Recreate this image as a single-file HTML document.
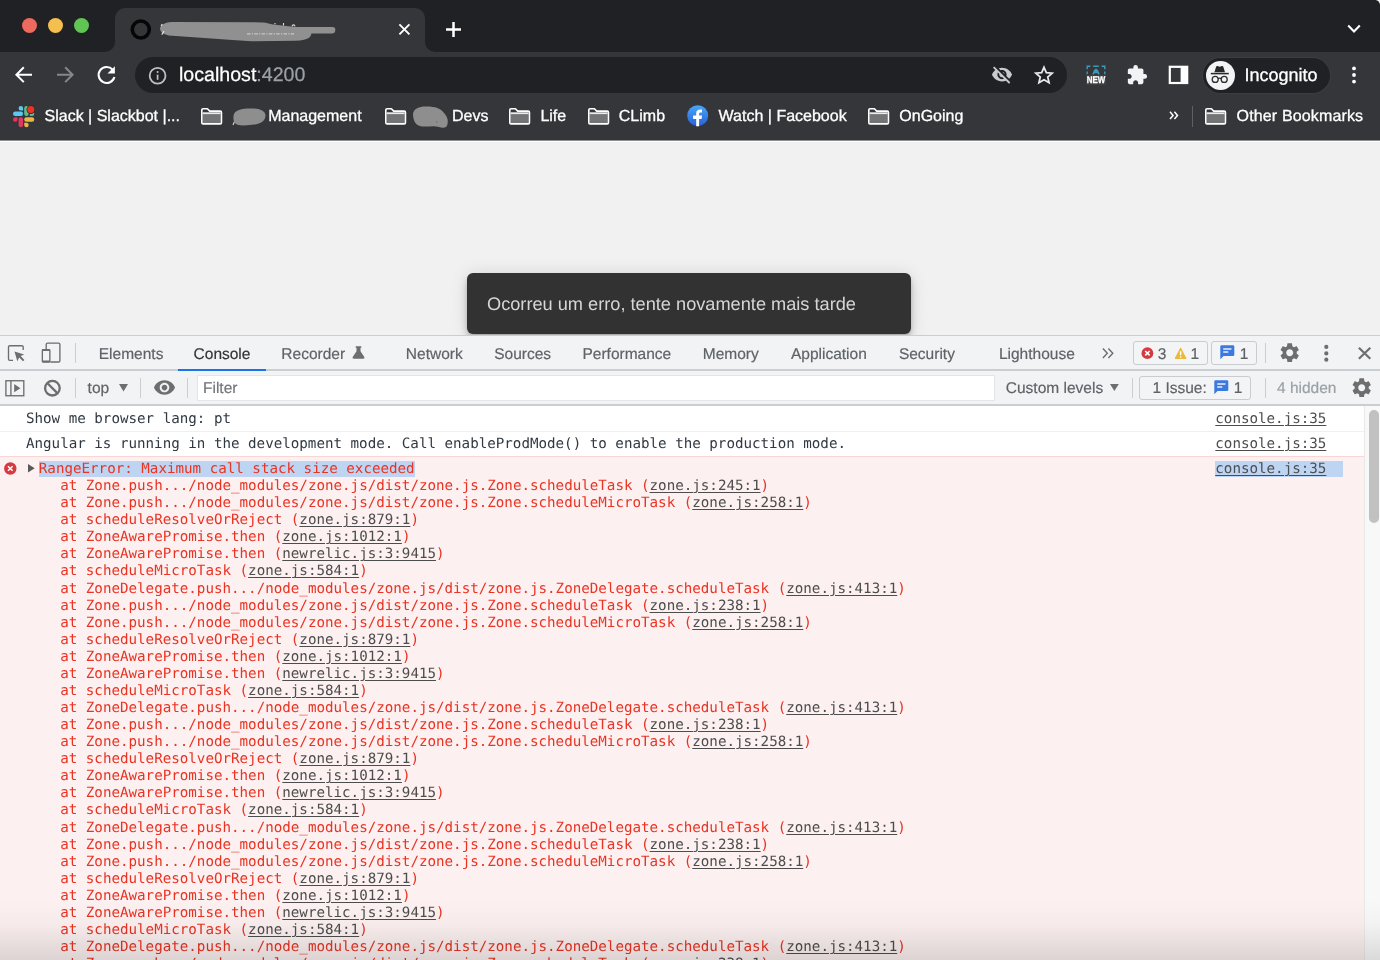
<!DOCTYPE html>
<html lang="en">
<head>
<meta charset="utf-8">
<title>localhost:4200</title>
<style>
html,body{margin:0;padding:0}
body{width:1380px;height:960px;overflow:hidden;position:relative;background:#f1f1f1;font-family:"Liberation Sans",Arial,sans-serif;-webkit-font-smoothing:antialiased;text-rendering:geometricPrecision}
#root{position:absolute;left:0;top:0;width:1380px;height:960px;overflow:hidden;will-change:transform}
.a{position:absolute}
svg{position:absolute;overflow:visible}
/* ---------- browser chrome ---------- */
#tabstrip{left:0;top:0;width:1380px;height:52px;background:#202124}
#chrome{left:0;top:51.6px;width:1380px;height:88.4px;background:#35363a}
#chromeline1{left:0;top:140px;width:1380px;height:1px;background:#8f9092}
#chromeline2{left:0;top:141px;width:1380px;height:1px;background:#fdfdfd}
.tl{width:15px;height:15px;border-radius:50%;top:17.5px}
#tab{left:115px;top:8px;width:310px;height:44px;background:#35363a;border-radius:10px 10px 0 0}
.tabfoot{top:41.6px;width:10px;height:10px;background:#35363a}
.tabfoot i{position:absolute;left:0;top:0;width:10px;height:10px;background:#202124}
#omni{left:135px;top:57px;width:932px;height:35.5px;border-radius:18px;background:#202124}
.bm{top:107px;height:20px;line-height:20px;font-size:16px;color:#fff;white-space:nowrap;-webkit-text-stroke:.3px #fff}
#url{left:179px;top:63px;height:24px;line-height:24px;font-size:19.6px;color:#fff;white-space:nowrap;-webkit-text-stroke:.25px #fff}
#url span{color:#9aa0a6;-webkit-text-stroke:.25px #9aa0a6}
#incog{left:1203px;top:57.5px;width:127px;height:35px;border-radius:18px;background:#202124;box-shadow:0 0 0 1px #3c3d41}
#incogc{left:1205.5px;top:60.5px;width:29px;height:29px;border-radius:50%;background:#f1f3f4}
#incogt{left:1244.5px;top:63px;height:24px;line-height:24px;font-size:18px;color:#fff;white-space:nowrap;-webkit-text-stroke:.3px #fff}
/* ---------- page ---------- */
#toast{left:466.5px;top:272.5px;width:444.5px;height:61.5px;border-radius:6px;background:#323232;box-shadow:0 3px 5px -1px rgba(0,0,0,.2),0 6px 10px 0 rgba(0,0,0,.14),0 1px 18px 0 rgba(0,0,0,.12)}
#toastt{left:487px;top:291px;height:26px;line-height:26px;font-size:18.2px;color:#d6d6d6;white-space:nowrap}

/* ---------- devtools ---------- */
#dt{left:0;top:335px;width:1380px;height:625px;background:#f1f3f4}
.hl{left:0;width:1380px;height:1px;background:#cacdd1}
.vsep{width:1px;background:#cbcdd1}
.tab{-webkit-text-stroke-width:.18px;top:344.8px;height:20px;line-height:20px;font-size:15.5px;width:120px;margin-left:-60px;text-align:center;color:#5f6368;white-space:nowrap}
.tb{-webkit-text-stroke-width:.18px;top:379.3px;height:20px;line-height:20px;font-size:15.5px;color:#5f6368;white-space:nowrap}
.badge{border:1px solid #c9ccd0;border-radius:3px;box-sizing:border-box;background:#f3f4f5}
#filter{left:196.5px;top:374.5px;width:798.5px;height:26.5px;background:#fff;box-sizing:border-box;border:1px solid #e3e5e8}
#cons{left:0;top:406px;width:1363.5px;height:554px;background:#fff;overflow:hidden}
#errbg{left:0;top:50px;width:1363.5px;height:504px;background:#fcf0f0;border-top:1px solid #f7d6d5;box-sizing:border-box}
.m{font-family:"DejaVu Sans Mono","Liberation Mono",monospace;font-size:14.19px;line-height:17px;height:17px;white-space:pre;color:#303942;letter-spacing:0}
.e{color:#e93323}
.m u{color:#4d4d4d;text-decoration:underline;text-decoration-thickness:1px;text-underline-offset:2px}
.src{left:1215.3px}
#sbar{left:1363.5px;top:406px;width:16.5px;height:554px;background:#f8f8f8;border-left:1px solid #e9e9e9;box-sizing:border-box}
#thumb{left:1368.5px;top:409.7px;width:10px;height:113.3px;border-radius:5px;background:#c1c1c1}
#shade{left:0;top:900px;width:1380px;height:60px;background:linear-gradient(to bottom,rgba(0,0,0,0) 0,rgba(0,0,0,.025) 40%,rgba(0,0,0,.12) 100%)}
</style>
</head>
<body>
<div id="root">

<!-- ================= TAB STRIP ================= -->
<div id="tabstrip" class="a"></div>
<div id="chrome" class="a"></div>
<div class="a tl" style="left:22px;background:#ed6a5e"></div>
<div class="a tl" style="left:48px;background:#f5bf4f"></div>
<div class="a tl" style="left:74px;background:#61c554"></div>

<div id="tab" class="a"></div>
<div class="a tabfoot" style="left:105px"><i style="border-radius:0 0 10px 0"></i></div>
<div class="a tabfoot" style="left:425px"><i style="border-radius:0 0 0 10px"></i></div>
<!-- favicon ring -->
<svg style="left:130px;top:18px" width="22" height="22" viewBox="0 0 22 22"><circle cx="10.800" cy="11.500" r="8.500" fill="none" stroke="#060606" stroke-width="3.600"/></svg>
<!-- redacted tab title scribble -->
<svg style="left:158px;top:18px" width="182" height="26" viewBox="0 0 182 26">
  <path d="M2 10.500C2 8 6 4.200 13.700 3.900L105 4.400C109 4.600 112 6 115 6.500L137 8.900L174.600 9.100Q177.600 9.400 177.300 12.300Q177 15.500 174 15.500L153.500 15.500Q153 18 151.400 19.500Q148 22.500 137 22.700L93.400 23.200Q70 22 50 20.300L10.800 17.400Q2 15.500 2 10.500Z" fill="#909090"/>
  <path d="M3 7.800l1.400-1.600M3.800 16.600l2.200-3.400" stroke="#e4e4e4" stroke-width="1.200" fill="none"/>
  <path d="M89 15.900h47" stroke="#dedede" stroke-width="0.900" stroke-dasharray="3.500 1.300 1.200 1.300" fill="none"/>
  <path d="M117 6.200v-1.200M125.500 7.600v-2.600M134 8.300c.3-1.800 2.600-2 3 0" stroke="#dcdcdc" stroke-width="1.100" fill="none"/>
</svg>
<!-- tab close -->
<svg style="left:398px;top:23px" width="13" height="13" viewBox="0 0 13 13"><path d="M1.4 1.4l10 10M11.4 1.4l-10 10" stroke="#fff" stroke-width="1.9" fill="none"/></svg>
<!-- new tab plus -->
<svg style="left:445px;top:21px" width="17" height="17" viewBox="0 0 17 17"><path d="M8.5 1v15M1 8.5h15" stroke="#fff" stroke-width="2.5" fill="none"/></svg>
<!-- tab search chevron -->
<svg style="left:1347px;top:24px" width="14" height="10" viewBox="0 0 14 10"><path d="M1.2 1.6L7 7.6l5.8-6" stroke="#fff" stroke-width="2.1" fill="none"/></svg>

<svg style="left:1375px;top:0" width="5" height="5" viewBox="0 0 5 5"><path d="M0.500 0H5V4.800Q4.500 0.800 0.500 0Z" fill="#f4f4f4"/></svg>
<!-- ================= TOOLBAR ================= -->
<!-- back -->
<svg style="left:14px;top:65px" width="20" height="20" viewBox="0 0 20 20"><path d="M18 9.7H2.6M9.8 2.3L2.4 9.7l7.4 7.4" stroke="#fff" stroke-width="2" fill="none"/></svg>
<!-- forward (disabled) -->
<svg style="left:55px;top:65px" width="20" height="20" viewBox="0 0 20 20"><path d="M2 9.7h15.4M10.2 2.3l7.4 7.4-7.4 7.4" stroke="#86878a" stroke-width="2" fill="none"/></svg>
<!-- reload -->
<svg style="left:96px;top:64px" width="21" height="22" viewBox="0 0 21 22"><path d="M16.6 5.6A8 8 0 1 0 18.4 12.9" stroke="#fff" stroke-width="2.1" fill="none"/><path d="M18.9 2.2v7.4h-7.4z" fill="#fff"/></svg>

<div id="omni" class="a"></div>
<!-- info icon -->
<svg style="left:148px;top:66px" width="20" height="20" viewBox="0 0 20 20"><circle cx="9.600" cy="9.800" r="7.900" fill="none" stroke="#bdc1c6" stroke-width="1.800"/><path d="M9.6 8.6v5.2" stroke="#bdc1c6" stroke-width="1.7"/><circle cx="9.6" cy="6" r="1.05" fill="#bdc1c6"/></svg>
<div id="url" class="a">localhost<span>:4200</span></div>
<!-- eye off -->
<svg style="left:991px;top:64px" width="22" height="22" viewBox="0 0 24 24"><path fill="#c9cacc" d="M12 6.5c2.76 0 5 2.24 5 5 0 .51-.1 1-.24 1.46l3.06 3.06c1.39-1.23 2.49-2.77 3.18-4.53C21.270 7.110 17 4 12 4c-1.27 0-2.49.2-3.64.57l2.170 2.170c.47-.14.96-.24 1.47-.24zM2.710 3.160a.996.996 0 0 0 0 1.410l1.970 1.970A11.892 11.892 0 0 0 1 11.500C2.730 15.890 7 19 12 19c1.520 0 2.970-.3 4.310-.82l2.720 2.720a.996.996 0 1 0 1.410-1.410L4.130 3.160c-.39-.39-1.030-.39-1.420 0zM12 16.500c-2.760 0-5-2.240-5-5 0-.77.180-1.500.49-2.140l1.570 1.570c-.03.180-.06.370-.06.570 0 1.660 1.340 3 3 3 .2 0 .38-.03.570-.07L14.140 16c-.65.320-1.370.5-2.140.5zm2.970-5.330a2.970 2.970 0 0 0-2.640-2.640l2.640 2.640z"/></svg>
<!-- star -->
<svg style="left:1033px;top:63.500px" width="22" height="22" viewBox="0 0 24 24"><path fill="none" stroke="#e8eaed" stroke-width="1.9" stroke-linejoin="miter" d="M12 3.600l2.550 5.900 6.350.55-4.820 4.200 1.450 6.250L12 17.180 6.470 20.500l1.450-6.250L3.100 10.050l6.350-.55z"/></svg>
<!-- NEW extension icon -->
<svg style="left:1086px;top:65px" width="20" height="20" viewBox="0 0 20 20">
  <rect x="0" y="10" width="20" height="10" fill="#403f40"/>
  <path d="M1.200 4.200V1.300H4.400M7.200 1.300H12.800M15.600 1.300H18.800V4.200M1.200 6.600V9.200M18.800 6.600V9.200" fill="none" stroke="#3a9ab8" stroke-width="1.400"/>
  <path d="M7 9.300L8.900 5.200Q10 4 11.100 5.200L13 9.300M9.400 7.400L10 6.200L10.600 7.400Z" stroke="#3a9ab8" stroke-width="1.600" fill="none"/>
  <text x="10" y="18.400" text-anchor="middle" font-family="Liberation Sans,Arial,sans-serif" font-weight="bold" font-size="10" fill="#fff" stroke="#fff" stroke-width=".35" textLength="18.500" lengthAdjust="spacingAndGlyphs">NEW</text>
</svg>
<!-- puzzle -->
<svg style="left:1126px;top:63.500px" width="22" height="22" viewBox="0 0 24 24"><path fill="#f1f3f4" d="M20.500 11H19V7c0-1.100-.9-2-2-2h-4V3.500a2.500 2.500 0 0 0-5 0V5H4c-1.100 0-1.990.9-1.990 2v3.800H3.500c1.490 0 2.700 1.210 2.700 2.700s-1.210 2.700-2.700 2.700H2V20c0 1.100.9 2 2 2h3.800v-1.500c0-1.490 1.210-2.700 2.700-2.700 1.490 0 2.700 1.210 2.700 2.700V22H17c1.100 0 2-.9 2-2v-4h1.500a2.500 2.500 0 0 0 0-5z"/></svg>
<!-- side panel -->
<svg style="left:1168px;top:65px" width="21" height="20" viewBox="0 0 21 20"><rect x="1.800" y="1.800" width="17.400" height="16.200" fill="none" stroke="#fff" stroke-width="2.200"/><rect x="12.600" y="1.800" width="6.600" height="16.200" fill="#fff"/></svg>
<!-- incognito pill -->
<div id="incog" class="a"></div>
<div id="incogc" class="a"></div>
<svg style="left:1209px;top:64px" width="22" height="22" viewBox="0 0 22 22">
  <path d="M5.400 8.200L7.100 2.700c.2-.6.800-.9 1.400-.7l2.200.8 2.200-.8c.6-.2 1.200.1 1.400.7l1.700 5.500z" fill="#26272a"/>
  <path d="M1.800 9.600h18" stroke="#26272a" stroke-width="1.500"/>
  <circle cx="6.200" cy="15.400" r="3" fill="none" stroke="#2d2e31" stroke-width="1.300"/>
  <circle cx="15.200" cy="15.400" r="3" fill="none" stroke="#2d2e31" stroke-width="1.300"/>
  <path d="M9.100 14.800c1-.8 2.200-.8 3.200 0" stroke="#2d2e31" stroke-width="1.200" fill="none"/>
</svg>
<div id="incogt" class="a">Incognito</div>
<!-- menu dots -->
<svg style="left:1350px;top:64px" width="8" height="22" viewBox="0 0 8 22"><circle cx="4" cy="4.400" r="1.900" fill="#fff"/><circle cx="4" cy="11" r="1.900" fill="#fff"/><circle cx="4" cy="17.600" r="1.900" fill="#fff"/></svg>

<!-- ================= BOOKMARKS BAR ================= -->
<svg style="left:12.7px;top:105.7px" width="21.3" height="21.3" viewBox="0 0 21.3 21.3">
  <path d="M10.070 4.500H7.820A2.250 2.250 0 1 1 10.070 2.250Z" fill="#5ec8f2"/>
  <rect x="0" y="5.570" width="10.070" height="4.500" rx="2.250" fill="#5ec8f2"/>
  <rect x="11.220" y="0" width="4.500" height="10.070" rx="2.250" fill="#5cbf8b"/>
  <path d="M16.800 10.070V7.820A2.250 2.250 0 1 1 19.050 10.070Z" fill="#5cbf8b"/>
  <path d="M4.500 11.220V13.470A2.250 2.250 0 1 1 2.250 11.220Z" fill="#de3863"/>
  <rect x="5.570" y="11.220" width="4.500" height="10.070" rx="2.250" fill="#de3863"/>
  <rect x="11.220" y="11.220" width="10.070" height="4.500" rx="2.250" fill="#ecb73f"/>
  <path d="M11.220 16.800H13.470A2.250 2.250 0 1 1 11.220 19.050Z" fill="#ecb73f"/>
  <circle cx="17.800" cy="3.600" r="4.300" fill="#2b2c30"/>
  <circle cx="17.800" cy="3.600" r="3.550" fill="#ec3323"/>
</svg>
<div class="a bm" style="left:44.5px">Slack | Slackbot |...</div>
<svg style="left:201.2px;top:107.7px" width="22" height="17" viewBox="0 0 22 17"><rect x="1.600" y="6.200" width="18" height="9" fill="#737476"/><rect x="1.600" y="4.300" width="18" height="1.900" fill="#ececec"/><path d="M0.800 2.100Q0.800 0.800 2.100 0.800H6.400L8.700 3.100H19.200Q20.450 3.100 20.450 4.300V14.700Q20.450 15.900 19.200 15.900H2.100Q0.800 15.900 0.800 14.700Z" fill="none" stroke="#fff" stroke-width="1.600" stroke-linejoin="round"/></svg>
<svg style="left:230px;top:104px" width="40" height="26" viewBox="0 0 40 26"><path d="M3 21L5.200 16" stroke="#cfcfcf" stroke-width="1.200" fill="none"/><path d="M3.500 12C4 6 12 4.500 20 4.500C28 4 35.500 6 35.500 11.500C35.500 17 30 20.500 22 20.800C15 21.500 8 22.500 5 19C3.500 17.500 3.300 15 3.500 12Z" fill="#8e8e8e"/></svg>
<div class="a bm" style="left:268.2px">Management</div>
<svg style="left:384.8px;top:107.7px" width="22" height="17" viewBox="0 0 22 17"><rect x="1.600" y="6.200" width="18" height="9" fill="#737476"/><rect x="1.600" y="4.300" width="18" height="1.900" fill="#ececec"/><path d="M0.800 2.100Q0.800 0.800 2.100 0.800H6.400L8.700 3.100H19.200Q20.450 3.100 20.450 4.300V14.700Q20.450 15.900 19.200 15.900H2.100Q0.800 15.900 0.800 14.700Z" fill="none" stroke="#fff" stroke-width="1.600" stroke-linejoin="round"/></svg>
<svg style="left:410px;top:102px" width="42" height="30" viewBox="0 0 42 30"><path d="M3 12C3.500 6 11 4 17 4.500C25 4.500 31 6.500 34 11C37 14 38.500 18 37.500 22C37 26 33 26.500 29 25C24 23.500 18 25 12 24.500C6 24 3 19 3 12Z" fill="#8e8e8e"/><path d="M26 20h1.600" stroke="#5f5f5f" stroke-width="0.800"/></svg>
<div class="a bm" style="left:452px">Devs</div>
<svg style="left:508.75px;top:107.7px" width="22" height="17" viewBox="0 0 22 17"><rect x="1.600" y="6.200" width="18" height="9" fill="#737476"/><rect x="1.600" y="4.300" width="18" height="1.900" fill="#ececec"/><path d="M0.800 2.100Q0.800 0.800 2.100 0.800H6.400L8.700 3.100H19.200Q20.450 3.100 20.450 4.300V14.700Q20.450 15.900 19.200 15.900H2.100Q0.800 15.900 0.800 14.700Z" fill="none" stroke="#fff" stroke-width="1.600" stroke-linejoin="round"/></svg>
<div class="a bm" style="left:540.4px">Life</div>
<svg style="left:587.9px;top:107.7px" width="22" height="17" viewBox="0 0 22 17"><rect x="1.600" y="6.200" width="18" height="9" fill="#737476"/><rect x="1.600" y="4.300" width="18" height="1.900" fill="#ececec"/><path d="M0.800 2.100Q0.800 0.800 2.100 0.800H6.400L8.700 3.100H19.200Q20.450 3.100 20.450 4.300V14.700Q20.450 15.900 19.200 15.900H2.100Q0.800 15.900 0.800 14.700Z" fill="none" stroke="#fff" stroke-width="1.600" stroke-linejoin="round"/></svg>
<div class="a bm" style="left:618.8px">CLimb</div>
<svg style="left:687px;top:105.300px" width="22" height="22" viewBox="0 0 22 22">
  <defs><linearGradient id="fbg" x1="0" y1="0" x2="0" y2="1"><stop offset="0" stop-color="#48a8f8"/><stop offset="1" stop-color="#2860d6"/></linearGradient></defs>
  <circle cx="10.700" cy="10.700" r="10.500" fill="url(#fbg)"/>
  <path d="M9.200 21.200V14H6.100V10.400H9.200V8.200C9.200 5.600 10.800 4.400 13 4.400C13.900 4.400 14.700 4.500 15 4.550V7.500H13.700C12.600 7.500 12.100 8 12.100 8.900V10.400H15L14.600 14H12.100V21.200Z" fill="#fff"/>
</svg>
<div class="a bm" style="left:718.6px">Watch | Facebook</div>
<svg style="left:867.8px;top:107.7px" width="22" height="17" viewBox="0 0 22 17"><rect x="1.600" y="6.200" width="18" height="9" fill="#737476"/><rect x="1.600" y="4.300" width="18" height="1.900" fill="#ececec"/><path d="M0.800 2.100Q0.800 0.800 2.100 0.800H6.400L8.700 3.100H19.200Q20.450 3.100 20.450 4.300V14.700Q20.450 15.900 19.200 15.900H2.100Q0.800 15.900 0.800 14.700Z" fill="none" stroke="#fff" stroke-width="1.600" stroke-linejoin="round"/></svg>
<div class="a bm" style="left:899.3px">OnGoing</div>
<svg style="left:1168.5px;top:111.3px" width="10" height="9" viewBox="0 0 10 9"><path d="M1 0.700L4.100 4.400L1 8.100M5.400 0.700L8.500 4.400L5.400 8.100" stroke="#fff" stroke-width="1.500" fill="none"/></svg>
<div class="a" style="left:1191.5px;top:106px;width:1.3px;height:21px;background:#5f6064"></div>
<svg style="left:1204.8px;top:107.7px" width="22" height="17" viewBox="0 0 22 17"><rect x="1.600" y="6.200" width="18" height="9" fill="#737476"/><rect x="1.600" y="4.300" width="18" height="1.900" fill="#ececec"/><path d="M0.800 2.100Q0.800 0.800 2.100 0.800H6.400L8.700 3.100H19.200Q20.450 3.100 20.450 4.300V14.700Q20.450 15.900 19.200 15.900H2.100Q0.800 15.900 0.800 14.700Z" fill="none" stroke="#fff" stroke-width="1.600" stroke-linejoin="round"/></svg>
<div class="a bm" style="left:1236.6px;letter-spacing:.14px">Other Bookmarks</div>

<div id="chromeline1" class="a"></div>
<div id="chromeline2" class="a"></div>

<!-- ================= PAGE ================= -->
<div id="toast" class="a"></div>
<div id="toastt" class="a">Ocorreu um erro, tente novamente mais tarde</div>

<!-- ================= DEVTOOLS ================= -->


<div id="dt" class="a"></div>
<div class="a hl" style="top:335px"></div>
<div class="a hl" style="top:369.2px;height:1.6px"></div>
<div class="a hl" style="top:404.2px;height:1.7px"></div>
<svg style="left:7px;top:344px" width="19" height="19" viewBox="0 0 19 19"><path d="M6 16.400H2.800Q1.500 16.400 1.500 15.100V3Q1.500 1.700 2.800 1.700H14.900Q16.200 1.700 16.200 3V5.900" fill="none" stroke="#6e6e6e" stroke-width="1.350"/><path d="M7.500 7.600L17.200 10.400L13.700 12L17.400 15.900L16 17.300L12.200 13.500L10.300 17.200Z" fill="#6e6e6e"/></svg>
<svg style="left:41px;top:342px" width="21" height="22" viewBox="0 0 21 22"><path d="M5.200 7V2.400Q5.200 1.100 6.500 1.100H17.600Q18.900 1.100 18.900 2.400V18.700Q18.900 20 17.600 20H9.300" fill="none" stroke="#6e6e6e" stroke-width="1.350"/><rect x="1.350" y="7.600" width="7.500" height="12.400" rx="0.800" fill="none" stroke="#6e6e6e" stroke-width="1.350"/><path d="M1.350 8.200h7.500M1.350 19.400h7.500" stroke="#6e6e6e" stroke-width="1.700"/></svg>
<div class="a vsep" style="left:75px;top:342.5px;height:20px"></div>
<div class="a tab" style="left:131.1px">Elements</div>
<div class="a tab" style="left:222.0px;color:#333">Console</div>
<div class="a tab" style="left:313.2px">Recorder</div>
<div class="a tab" style="left:434.3px">Network</div>
<div class="a tab" style="left:522.65px">Sources</div>
<div class="a tab" style="left:626.85px">Performance</div>
<div class="a tab" style="left:730.8px">Memory</div>
<div class="a tab" style="left:828.9px">Application</div>
<div class="a tab" style="left:926.9px">Security</div>
<div class="a tab" style="left:1036.85px">Lighthouse</div>
<div class="a" style="left:178px;top:368.700px;width:88.200px;height:2.200px;background:#1a73e8"></div>
<svg style="left:351.500px;top:345.500px" width="13" height="13" viewBox="0 0 13 13"><path d="M3.700 0.300H9.300V1.700H8.500V5.200L12.300 11.100Q13 12.700 11.300 12.700H1.700Q0 12.700 0.700 11.100L4.500 5.200V1.700H3.700Z" fill="#6e6e6e"/></svg>
<svg style="left:1102px;top:347.500px" width="12" height="11" viewBox="0 0 12 11"><path d="M0.900 0.600L5.300 5.300L0.900 10M6.400 0.600L10.800 5.300L6.400 10" stroke="#6e6e6e" stroke-width="1.400" fill="none"/></svg>
<div class="a badge" style="left:1133px;top:341.300px;width:74.800px;height:23.500px"></div>
<svg style="left:1141px;top:346.500px" width="13" height="13" viewBox="0 0 13 13"><circle cx="6.400" cy="6.200" r="5.900" fill="#d63a40"/><path d="M4.200 4L8.600 8.400M8.600 4L4.200 8.400" stroke="#fff" stroke-width="1.500"/></svg>
<div class="a tab" style="left:1162px">3</div>
<svg style="left:1174px;top:346.500px" width="13" height="13" viewBox="0 0 13 13"><path d="M6.300 0.700Q6.600 0.200 6.900 0.700L12.300 11Q12.600 11.900 11.800 11.900H1.400Q0.600 11.900 0.900 11Z" fill="#e9b93b"/><path d="M6.600 4.200V8.200" stroke="#fff" stroke-width="1.500"/><circle cx="6.600" cy="10" r="0.850" fill="#fff"/></svg>
<div class="a tab" style="left:1194.8px">1</div>
<div class="a badge" style="left:1211px;top:341.300px;width:45.800px;height:23.500px"></div>
<svg style="left:1219.9px;top:345.2px" width="15" height="15" viewBox="0 0 15 15"><path d="M1.500 0.200H13.100Q14.300 0.200 14.300 1.400V9.800Q14.300 11 13.100 11H3.500L0.300 14.300V1.400Q0.300 0.200 1.500 0.200Z" fill="#3b78e0"/><path d="M3.200 3.900H11.400M3.200 7H8.300" stroke="#e8f0fe" stroke-width="1.500"/></svg>
<div class="a tab" style="left:1244px">1</div>
<div class="a vsep" style="left:1265px;top:342.500px;height:20.300px"></div>
<svg style="left:1277.900px;top:341.100px" width="23.400" height="23.400" viewBox="0 0 24 24"><path d="M19.14 12.94c.04-.3.06-.61.06-.94 0-.32-.02-.64-.07-.94l2.030-1.580c.18-.14.23-.41.12-.61l-1.920-3.320c-.12-.22-.37-.29-.59-.22l-2.390.960c-.5-.38-1.030-.7-1.620-.94l-.36-2.540c-.04-.24-.24-.41-.48-.41h-3.840c-.24 0-.43.17-.47.41l-.36 2.540c-.59.24-1.130.57-1.620.94l-2.390-.960c-.22-.08-.47 0-.59.22L2.740 8.870c-.12.21-.08.47.12.61l2.030 1.580c-.05.3-.09.63-.09.94s.02.64.07.94l-2.030 1.580c-.18.14-.23.41-.12.61l1.920 3.320c.12.22.37.29.59.22l2.390-.960c.5.38 1.030.7 1.620.94l.36 2.540c.05.24.24.41.48.41h3.840c.24 0 .44-.17.47-.41l.36-2.540c.59-.24 1.130-.56 1.620-.94l2.390.960c.22.08.47 0 .59-.22l1.920-3.320c.12-.22.07-.47-.12-.61l-2.010-1.580zM12 15.600c-1.980 0-3.600-1.620-3.600-3.600s1.620-3.600 3.600-3.600 3.600 1.620 3.600 3.600-1.620 3.600-3.600 3.600z" fill="#6e6e6e"/></svg>
<svg style="left:1323px;top:344px" width="7" height="19" viewBox="0 0 7 19"><circle cx="3.300" cy="2.900" r="2.100" fill="#6e6e6e"/><circle cx="3.300" cy="9.400" r="2.100" fill="#6e6e6e"/><circle cx="3.300" cy="15.700" r="2.100" fill="#6e6e6e"/></svg>
<svg style="left:1358px;top:346.500px" width="13" height="13" viewBox="0 0 13 13"><path d="M0.900 0.800L12.300 11.800M12.300 0.800L0.900 11.800" stroke="#6e6e6e" stroke-width="2.200" fill="none"/></svg>
<svg style="left:5px;top:380px" width="20" height="17" viewBox="0 0 20 17"><rect x="0.900" y="0.750" width="17.900" height="15" fill="none" stroke="#6e6e6e" stroke-width="1.350"/><path d="M5.900 0.750V15.750" stroke="#6e6e6e" stroke-width="1.350"/><path d="M9.200 4.100L15.400 8.200L9.200 12.300Z" fill="#6e6e6e"/></svg>
<svg style="left:43px;top:379px" width="19" height="19" viewBox="0 0 19 19"><circle cx="9.400" cy="9.200" r="7.300" fill="none" stroke="#6e6e6e" stroke-width="2.300"/><path d="M4.200 4L14.600 14.400" stroke="#6e6e6e" stroke-width="2.300"/></svg>
<div class="a vsep" style="left:75px;top:377.500px;height:20px"></div>
<div class="a tb" style="left:87.600px">top</div>
<svg style="left:119px;top:383.800px" width="9" height="8" viewBox="0 0 9 8"><path d="M0 0H9L4.500 7.400Z" fill="#6e6e6e"/></svg>
<div class="a vsep" style="left:139.700px;top:377.500px;height:20px"></div>
<svg style="left:152.800px;top:376.300px" width="23" height="23" viewBox="0 0 24 24"><path d="M12 4.500C7 4.500 2.730 7.610 1 12c1.730 4.390 6 7.500 11 7.500s9.270-3.110 11-7.500c-1.730-4.390-6-7.500-11-7.500zM12 17c-2.760 0-5-2.240-5-5s2.240-5 5-5 5 2.240 5 5-2.240 5-5 5zm0-8c-1.660 0-3 1.340-3 3s1.340 3 3 3 3-1.340 3-3-1.340-3-3-3z" fill="#6e6e6e"/></svg>
<div class="a vsep" style="left:187.300px;top:377.500px;height:20px"></div>
<div id="filter" class="a"></div>
<div class="a tb" style="left:203px;color:#70757a">Filter</div>
<div class="a tb" style="left:1005.800px">Custom levels</div>
<svg style="left:1110.300px;top:384px" width="9" height="8" viewBox="0 0 9 8"><path d="M0 0H8.800L4.400 7Z" fill="#6e6e6e"/></svg>
<div class="a vsep" style="left:1132px;top:377.500px;height:20px"></div>
<div class="a badge" style="left:1138.500px;top:376.200px;width:112.500px;height:23.400px"></div>
<div class="a tb" style="left:1152.500px">1 Issue:</div>
<svg style="left:1213.8px;top:380px" width="15" height="15" viewBox="0 0 15 15"><path d="M1.500 0.200H13.100Q14.300 0.200 14.300 1.400V9.800Q14.300 11 13.100 11H3.500L0.300 14.300V1.400Q0.300 0.200 1.500 0.200Z" fill="#3b78e0"/><path d="M3.200 3.900H11.400M3.200 7H8.300" stroke="#e8f0fe" stroke-width="1.500"/></svg>
<div class="a tb" style="left:1233.700px">1</div>
<div class="a vsep" style="left:1264.500px;top:377.500px;height:20.300px"></div>
<div class="a tb" style="left:1277px;color:#9aa0a6">4 hidden</div>
<svg style="left:1350.300px;top:376px" width="23.400" height="23.400" viewBox="0 0 24 24"><path d="M19.14 12.94c.04-.3.06-.61.06-.94 0-.32-.02-.64-.07-.94l2.030-1.580c.18-.14.23-.41.12-.61l-1.920-3.320c-.12-.22-.37-.29-.59-.22l-2.390.960c-.5-.38-1.030-.7-1.620-.94l-.36-2.540c-.04-.24-.24-.41-.48-.41h-3.840c-.24 0-.43.17-.47.41l-.36 2.540c-.59.24-1.130.57-1.620.94l-2.390-.960c-.22-.08-.47 0-.59.22L2.740 8.870c-.12.21-.08.47.12.61l2.030 1.580c-.05.3-.09.63-.09.94s.02.64.07.94l-2.030 1.580c-.18.14-.23.41-.12.61l1.920 3.320c.12.22.37.29.59.22l2.390-.960c.5.38 1.030.7 1.620.94l.36 2.540c.05.24.24.41.48.41h3.840c.24 0 .44-.17.47-.41l.36-2.540c.59-.24 1.130-.56 1.620-.94l2.390.960c.22.08.47 0 .59-.22l1.920-3.320c.12-.22.07-.47-.12-.61l-2.010-1.580zM12 15.600c-1.980 0-3.600-1.620-3.600-3.600s1.620-3.600 3.600-3.600 3.600 1.620 3.600 3.600-1.620 3.600-3.600 3.600z" fill="#6e6e6e"/></svg>
<div id="cons" class="a">
<div id="errbg" class="a"></div>
<div class="a" style="left:0;top:24.500px;width:1363.500px;height:1px;background:#f0f0f0"></div>
<div class="a m " style="left:26px;top:5.40px">Show me browser lang: pt</div>
<div class="a m " style="left:1215.3px;top:5.40px"><u>console.js:35</u></div>
<div class="a m " style="left:26px;top:30.10px">Angular is running in the development mode. Call enableProdMode() to enable the production mode.</div>
<div class="a m " style="left:1215.3px;top:30.10px"><u>console.js:35</u></div>
<div class="a" style="left:38.800px;top:55px;width:376.300px;height:16px;background:#bdd4f3"></div>
<div class="a" style="left:1215px;top:55px;width:128px;height:16px;background:#bdd4f3"></div>
<svg style="left:4px;top:55.500px" width="13" height="13" viewBox="0 0 13 13"><circle cx="6.300" cy="6.500" r="6.200" fill="#d63a40"/><path d="M4 4.200L8.600 8.800M8.600 4.200L4 8.800" stroke="#fff" stroke-width="1.600"/></svg>
<svg style="left:28px;top:58.300px" width="7" height="9" viewBox="0 0 7 9"><path d="M0 0L6.700 4.300L0 8.600Z" fill="#5a5a5a"/></svg>
<div class="a m e" style="left:38.8px;top:55.10px">RangeError: Maximum call stack size exceeded</div>
<div class="a m " style="left:1215.3px;top:55.10px"><u>console.js:35</u></div>
<div class="a m e" style="left:60.2px;top:72.10px">at Zone.push.../node_modules/zone.js/dist/zone.js.Zone.scheduleTask (<u>zone.js:245:1</u>)</div>
<div class="a m e" style="left:60.2px;top:89.17px">at Zone.push.../node_modules/zone.js/dist/zone.js.Zone.scheduleMicroTask (<u>zone.js:258:1</u>)</div>
<div class="a m e" style="left:60.2px;top:106.24px">at scheduleResolveOrReject (<u>zone.js:879:1</u>)</div>
<div class="a m e" style="left:60.2px;top:123.31px">at ZoneAwarePromise.then (<u>zone.js:1012:1</u>)</div>
<div class="a m e" style="left:60.2px;top:140.38px">at ZoneAwarePromise.then (<u>newrelic.js:3:9415</u>)</div>
<div class="a m e" style="left:60.2px;top:157.45px">at scheduleMicroTask (<u>zone.js:584:1</u>)</div>
<div class="a m e" style="left:60.2px;top:174.52px">at ZoneDelegate.push.../node_modules/zone.js/dist/zone.js.ZoneDelegate.scheduleTask (<u>zone.js:413:1</u>)</div>
<div class="a m e" style="left:60.2px;top:191.59px">at Zone.push.../node_modules/zone.js/dist/zone.js.Zone.scheduleTask (<u>zone.js:238:1</u>)</div>
<div class="a m e" style="left:60.2px;top:208.66px">at Zone.push.../node_modules/zone.js/dist/zone.js.Zone.scheduleMicroTask (<u>zone.js:258:1</u>)</div>
<div class="a m e" style="left:60.2px;top:225.73px">at scheduleResolveOrReject (<u>zone.js:879:1</u>)</div>
<div class="a m e" style="left:60.2px;top:242.80px">at ZoneAwarePromise.then (<u>zone.js:1012:1</u>)</div>
<div class="a m e" style="left:60.2px;top:259.87px">at ZoneAwarePromise.then (<u>newrelic.js:3:9415</u>)</div>
<div class="a m e" style="left:60.2px;top:276.94px">at scheduleMicroTask (<u>zone.js:584:1</u>)</div>
<div class="a m e" style="left:60.2px;top:294.01px">at ZoneDelegate.push.../node_modules/zone.js/dist/zone.js.ZoneDelegate.scheduleTask (<u>zone.js:413:1</u>)</div>
<div class="a m e" style="left:60.2px;top:311.08px">at Zone.push.../node_modules/zone.js/dist/zone.js.Zone.scheduleTask (<u>zone.js:238:1</u>)</div>
<div class="a m e" style="left:60.2px;top:328.15px">at Zone.push.../node_modules/zone.js/dist/zone.js.Zone.scheduleMicroTask (<u>zone.js:258:1</u>)</div>
<div class="a m e" style="left:60.2px;top:345.22px">at scheduleResolveOrReject (<u>zone.js:879:1</u>)</div>
<div class="a m e" style="left:60.2px;top:362.29px">at ZoneAwarePromise.then (<u>zone.js:1012:1</u>)</div>
<div class="a m e" style="left:60.2px;top:379.36px">at ZoneAwarePromise.then (<u>newrelic.js:3:9415</u>)</div>
<div class="a m e" style="left:60.2px;top:396.43px">at scheduleMicroTask (<u>zone.js:584:1</u>)</div>
<div class="a m e" style="left:60.2px;top:413.50px">at ZoneDelegate.push.../node_modules/zone.js/dist/zone.js.ZoneDelegate.scheduleTask (<u>zone.js:413:1</u>)</div>
<div class="a m e" style="left:60.2px;top:430.57px">at Zone.push.../node_modules/zone.js/dist/zone.js.Zone.scheduleTask (<u>zone.js:238:1</u>)</div>
<div class="a m e" style="left:60.2px;top:447.64px">at Zone.push.../node_modules/zone.js/dist/zone.js.Zone.scheduleMicroTask (<u>zone.js:258:1</u>)</div>
<div class="a m e" style="left:60.2px;top:464.71px">at scheduleResolveOrReject (<u>zone.js:879:1</u>)</div>
<div class="a m e" style="left:60.2px;top:481.78px">at ZoneAwarePromise.then (<u>zone.js:1012:1</u>)</div>
<div class="a m e" style="left:60.2px;top:498.85px">at ZoneAwarePromise.then (<u>newrelic.js:3:9415</u>)</div>
<div class="a m e" style="left:60.2px;top:515.92px">at scheduleMicroTask (<u>zone.js:584:1</u>)</div>
<div class="a m e" style="left:60.2px;top:532.99px">at ZoneDelegate.push.../node_modules/zone.js/dist/zone.js.ZoneDelegate.scheduleTask (<u>zone.js:413:1</u>)</div>
<div class="a m e" style="left:60.2px;top:550.06px">at Zone.push.../node_modules/zone.js/dist/zone.js.Zone.scheduleTask (<u>zone.js:238:1</u>)</div>
</div>
<div id="sbar" class="a"></div><div id="thumb" class="a"></div>
<div id="shade" class="a"></div>

</div>
</body>
</html>
